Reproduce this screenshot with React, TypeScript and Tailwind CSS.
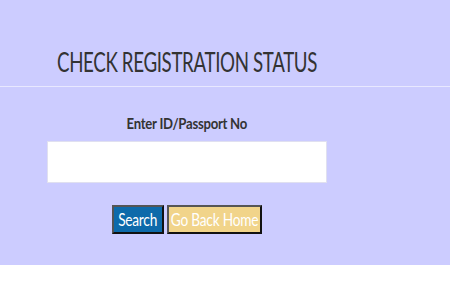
export default function App() {
  return (
    <div className="w-[450px] bg-white font-['Lato','Noto_Sans',sans-serif]">
      <div className="h-[265px] bg-[#ccccff]">
        <div className="h-[87px] border-b border-[#e8e8ff] pl-[57px] pt-[45px]">
          <h1 className="inline-block origin-left scale-x-[0.72] whitespace-nowrap text-[26px] leading-[34px] font-normal tracking-[-0.5px] text-[#333333]">
            CHECK REGISTRATION STATUS
          </h1>
        </div>
        <div className="w-[374px] flex flex-col items-center pt-[26px]">
          <label className="inline-block scale-x-[0.875] whitespace-nowrap text-[15px] leading-[20px] font-bold tracking-[-0.3px] text-[#333333]">
            Enter ID/Passport No
          </label>
          <input
            type="text"
            className="mt-[8px] h-[42px] w-[280px] bg-white border border-[#e0e0f0] outline-none"
          />
          <div className="mt-[22px] flex gap-[3px]">
            <button className="flex h-[29px] w-[52px] items-center justify-center bg-[#0d6aaa] text-white text-[18px] border-2 border-t-[#555555] border-l-[#555555] border-b-[#111111] border-r-[#111111]">
              <span className="inline-block scale-x-[0.76] whitespace-nowrap tracking-[-0.3px]">Search</span>
            </button>
            <button className="flex h-[29px] w-[95px] items-center justify-center bg-[#f1d48a] text-white text-[18px] border-2 border-t-[#555555] border-l-[#555555] border-b-[#111111] border-r-[#111111]">
              <span className="inline-block scale-x-[0.76] whitespace-nowrap tracking-[-0.3px]">Go Back Home</span>
            </button>
          </div>
        </div>
      </div>
      <div className="h-[22px]" />
    </div>
  )
}
